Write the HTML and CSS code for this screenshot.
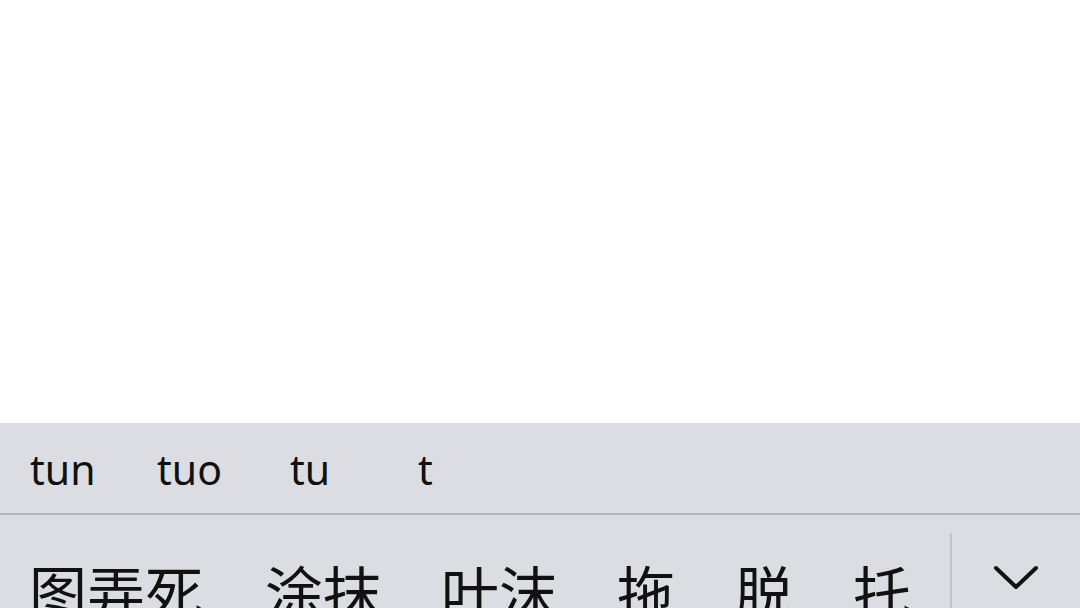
FILE: index.html
```html
<!DOCTYPE html>
<html lang="zh-CN">
<head>
<meta charset="utf-8">
<title>Keyboard candidates</title>
<link rel="stylesheet" href="styles.css">
</head>
<body>
<div class="screen">
  <div class="content"></div>
  <div class="ime">
    <div class="pinyin-row">
      <span class="py">tun</span>
      <span class="py">tuo</span>
      <span class="py">tu</span>
      <span class="py">t</span>
    </div>
    <div class="cand-row">
      <div class="cands">
        <span class="cand cand-first">图弄死</span>
        <span class="cand">涂抹</span>
        <span class="cand">叶沫</span>
        <span class="cand">拖</span>
        <span class="cand">脱</span>
        <span class="cand">托</span>
      </div>
      <div class="expand">
        <svg class="chev" width="48" height="28" viewBox="0 0 48 28">
          <polyline points="4,4 24,23 44,4" fill="none" stroke="#111" stroke-width="4" stroke-linecap="round" stroke-linejoin="round"/>
        </svg>
      </div>
    </div>
  </div>
</div>
</body>
</html>
```
FILE: styles.css
```css
html, body {
  margin: 0;
  padding: 0;
  background: #ffffff;
}
.screen {
  width: 1080px;
  height: 608px;
  display: flex;
  flex-direction: column;
  overflow: hidden;
  font-family: "Noto Sans", "Noto Sans CJK SC", sans-serif;
  color: #111111;
}
.content {
  height: 423px;
  flex: none;
  background: #ffffff;
}
.ime {
  flex: 1;
  background: #dcdde3;
  display: flex;
  flex-direction: column;
}
.pinyin-row {
  height: 92px;
  flex: none;
  box-sizing: border-box;
  border-bottom: 2px solid #b5b6bc;
  display: grid;
  grid-template-columns: 127px 133px 128px auto;
  padding-left: 30px;
  align-items: center;
  font-size: 41px;
  line-height: 1;
  padding-top: 3px;
}
.py {
  display: block;
}
.cand-row {
  flex: 1;
  display: flex;
  align-items: stretch;
}
.cands {
  width: 952px;
  flex: none;
  box-sizing: border-box;
  display: flex;
  gap: 60px;
  padding-left: 29px;
  font-family: "Noto Sans CJK SC", sans-serif;
  font-size: 58px;
  line-height: 1;
  border-right: 2px solid #c2c3c8;
  margin-top: 18px;
  padding-top: 28px;
  white-space: nowrap;
}
.cand-first {
  margin-right: 2px;
}
.expand {
  flex: 1;
  padding-left: 40px;
  padding-top: 49px;
}
.chev {
  display: block;
}
```
